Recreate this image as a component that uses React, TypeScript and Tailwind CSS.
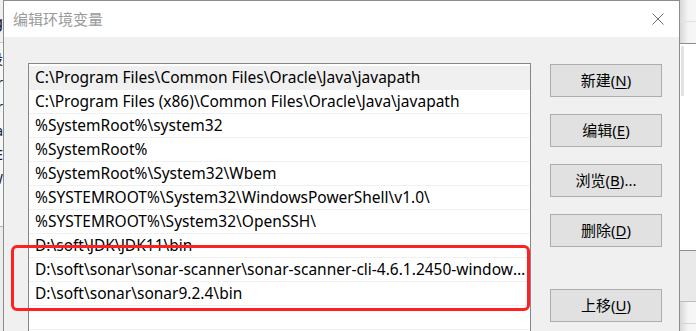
import React from 'react';

const paths = [
  'C:\\Program Files\\Common Files\\Oracle\\Java\\javapath',
  'C:\\Program Files (x86)\\Common Files\\Oracle\\Java\\javapath',
  '%SystemRoot%\\system32',
  '%SystemRoot%',
  '%SystemRoot%\\System32\\Wbem',
  '%SYSTEMROOT%\\System32\\WindowsPowerShell\\v1.0\\',
  '%SYSTEMROOT%\\System32\\OpenSSH\\',
  'D:\\soft\\JDK\\JDK11\\bin',
  'D:\\soft\\sonar\\sonar-scanner\\sonar-scanner-cli-4.6.1.2450-windows\\bin',
  'D:\\soft\\sonar\\sonar9.2.4\\bin',
  '',
  '',
];

const Btn: React.FC<{ label: string; hot: string; tail?: string; className?: string }> = ({ label, hot, tail = '', className = '' }) => (
  <button className={`h-[33px] w-full border border-[#adadad] bg-[#e1e1e1] text-[15px] leading-none text-black ${className}`}>
    {label}(<span className="underline underline-offset-2">{hot}</span>){tail}
  </button>
);

export default function App() {
  return (
    <div className="relative flex h-[331px] w-[696px] overflow-hidden bg-[#f0f0f0] font-['Noto_Sans','Noto_Sans_CJK_SC',sans-serif]">
      {/* window behind, left edge */}
      <div className="flex w-[3px] shrink-0 flex-col overflow-hidden text-[14px] leading-none text-[#1a1a2e]">
        <div className="flex h-[43px] justify-end border-b border-[#c8c8c8] bg-[#f0f0f0] pt-[14px] text-[16px]">g</div>
        <div className="flex flex-col gap-[10px] bg-[#f7f7f7] pt-[9px] pb-[40px]">
          <span className="flex justify-end">设</span>
          <span className="flex justify-end">r</span>
          <span className="flex justify-end">r</span>
          <span className="flex justify-end">a</span>
          <span className="flex justify-end">E</span>
          <span className="flex justify-end">W</span>
        </div>
        <div className="flex-1 border-t border-[#b4b4b4] bg-[#ececec]" />
      </div>

      {/* dialog */}
      <div className="flex w-[677px] shrink-0 flex-col border-x border-t border-[#8c8c8c]">
        <div className="flex h-[36px] shrink-0 items-center justify-between bg-white pl-[9px] pr-[14px]">
          <span className="text-[15px] text-[#9a9a9a] font-['Noto_Sans_CJK_SC',sans-serif]">编辑环境变量</span>
          <svg width="12" height="12" viewBox="0 0 12 12" className="mr-[1px]">
            <path d="M0.5 0.5 L11.5 11.5 M11.5 0.5 L0.5 11.5" stroke="#6f6f6f" strokeWidth="1" fill="none" />
          </svg>
        </div>
        <div className="flex flex-1 bg-[#f0f0f0] pl-[24px] pt-[26px]">
          <div className="w-[503px] shrink-0 border border-[#828790] bg-white pt-[2px]">
            {paths.map((p, i) => (
              <div
                key={i}
                className={`flex h-[24px] items-center border-b border-[#f0f0f0] pl-[6px] text-[15.5px] text-black ${i === 0 ? 'bg-[#f0f0f0]' : ''}`}
              >
                <span className="truncate">{p}</span>
              </div>
            ))}
          </div>
          <div className="ml-[19px] flex w-[112px] shrink-0 flex-col gap-[17px] pt-[1px]">
            <Btn label="新建" hot="N" />
            <Btn label="编辑" hot="E" />
            <Btn label="浏览" hot="B" tail="..." />
            <Btn label="删除" hot="D" />
            <Btn label="上移" hot="U" className="mt-[25px]" />
          </div>
        </div>
      </div>

      {/* window behind, right edge */}
      <div className="flex flex-1 flex-col bg-gradient-to-r from-[#d8d8d8] via-[#f4f4f4] to-[#f7f7f7]">
        <div className="h-[22px] border-b border-[#e2e2e2]" />
        <div className="h-[22px] border-b border-[#8e8e8e]" />
        <div className="relative h-[207px] border-b border-[#8e8e8e] bg-white">
          <div className="absolute left-[1px] top-[2px] h-[50px] w-[3px] bg-[#e3e3e3]" />
        </div>
        <div className="h-[51px] border-b border-[#bdbdbd] bg-[#e9e9e9]" />
        <div className="h-[22px] border-b border-[#d6d6d6]" />
        <div className="flex-1" />
      </div>

      {/* annotation */}
      <div className="pointer-events-none absolute left-[11px] top-[245px] h-[66px] w-[519px] rounded-[6px] border-[3px] border-[#ff2020]" />
    </div>
  );
}
